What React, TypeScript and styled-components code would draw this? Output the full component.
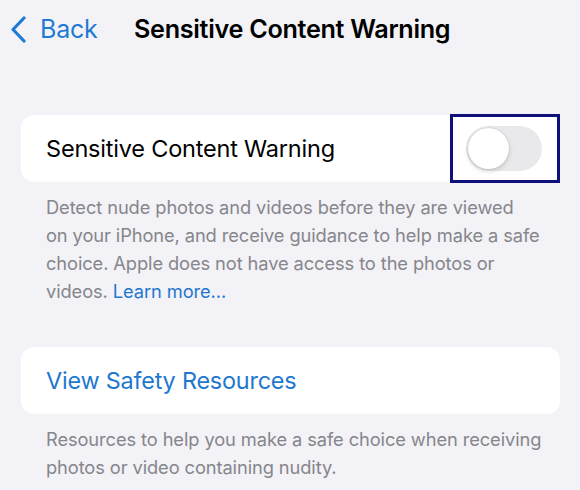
import styled, { createGlobalStyle } from 'styled-components'
import { useState } from 'react'

const GlobalStyle = createGlobalStyle`
  html, body {
    margin: 0;
    padding: 0;
    background: #f2f2f7;
  }
  body {
    font-family: Inter, "Noto Sans", "Liberation Sans", sans-serif;
    -webkit-font-smoothing: antialiased;
  }
`

const Screen = styled.div`
  width: 580px;
  height: 490px;
  overflow: hidden;
  background: #f2f2f7;
`

const NavBar = styled.div`
  display: flex;
  align-items: center;
  height: 58px;
  padding-left: 10px;
`

const BackButton = styled.div`
  display: flex;
  align-items: center;
  gap: 13px;
  color: #1f7ad3;
  font-size: 25px;
  letter-spacing: -0.2px;
  width: 124px;
`

const Title = styled.div`
  font-size: 25.2px;
  font-weight: 600;
  color: #000;
  letter-spacing: -0.3px;
`

const Section = styled.div<{ $top: number }>`
  margin: ${(p) => p.$top}px 20px 0 21px;
`

const Card = styled.div`
  position: relative;
  display: flex;
  align-items: center;
  justify-content: space-between;
  height: 67px;
  padding: 0 18px 0 25px;
  background: #fff;
  border-radius: 13px;
`

const RowLabel = styled.div<{ $link?: boolean }>`
  font-size: ${(p) => (p.$link ? 23.4 : 23.5)}px;
  color: ${(p) => (p.$link ? '#1f78cf' : '#000')};
  letter-spacing: -0.2px;
`

const Footer = styled.p`
  margin: 11px 0 0 25px;
  padding-right: 14px;
  font-size: 18.3px;
  line-height: 28px;
  color: #86868b;
  letter-spacing: -0.1px;
`

const Link = styled.span`
  color: #1f78cf;
`

const Track = styled.div<{ $on: boolean }>`
  position: relative;
  width: 76px;
  height: 45px;
  border-radius: 23px;
  background: ${(p) => (p.$on ? '#34c759' : '#e9e9eb')};
  cursor: pointer;
`

const Knob = styled.div<{ $on: boolean }>`
  position: absolute;
  top: 2px;
  left: ${(p) => (p.$on ? 33 : 2)}px;
  width: 41px;
  height: 41px;
  border-radius: 50%;
  background: #fff;
  box-shadow: 0 2px 5px rgba(0, 0, 0, 0.16), 0 0 0 0.5px rgba(0, 0, 0, 0.08);
`

const Highlight = styled.div`
  position: absolute;
  top: -1px;
  right: 0px;
  width: 110px;
  height: 69px;
  box-sizing: border-box;
  border: 3px solid #10107a;
  pointer-events: none;
`

const Chevron = () => (
  <svg width="17" height="27" viewBox="0 0 17 27">
    <path d="M14 2 L3 13.5 L14 25" fill="none" stroke="#1f7ad3" strokeWidth="3.2" strokeLinecap="round" strokeLinejoin="round" />
  </svg>
)

export default function App() {
  const [on, setOn] = useState(false)
  return (
    <Screen>
      <GlobalStyle />
      <NavBar>
        <BackButton>
          <Chevron />
          Back
        </BackButton>
        <Title>Sensitive Content Warning</Title>
      </NavBar>
      <Section $top={57}>
        <Card>
          <RowLabel>Sensitive Content Warning</RowLabel>
          <Track $on={on} onClick={() => setOn(!on)}>
            <Knob $on={on} />
          </Track>
          <Highlight />
        </Card>
        <Footer>
          Detect nude photos and videos before they are viewed
          <br />
          on your iPhone, and receive guidance to help make a safe choice. Apple does not have access to the photos or
          videos. <Link>Learn more...</Link>
        </Footer>
      </Section>
      <Section $top={42}>
        <Card>
          <RowLabel $link>View Safety Resources</RowLabel>
        </Card>
        <Footer>Resources to help you make a safe choice when receiving photos or video containing nudity.</Footer>
      </Section>
    </Screen>
  )
}
